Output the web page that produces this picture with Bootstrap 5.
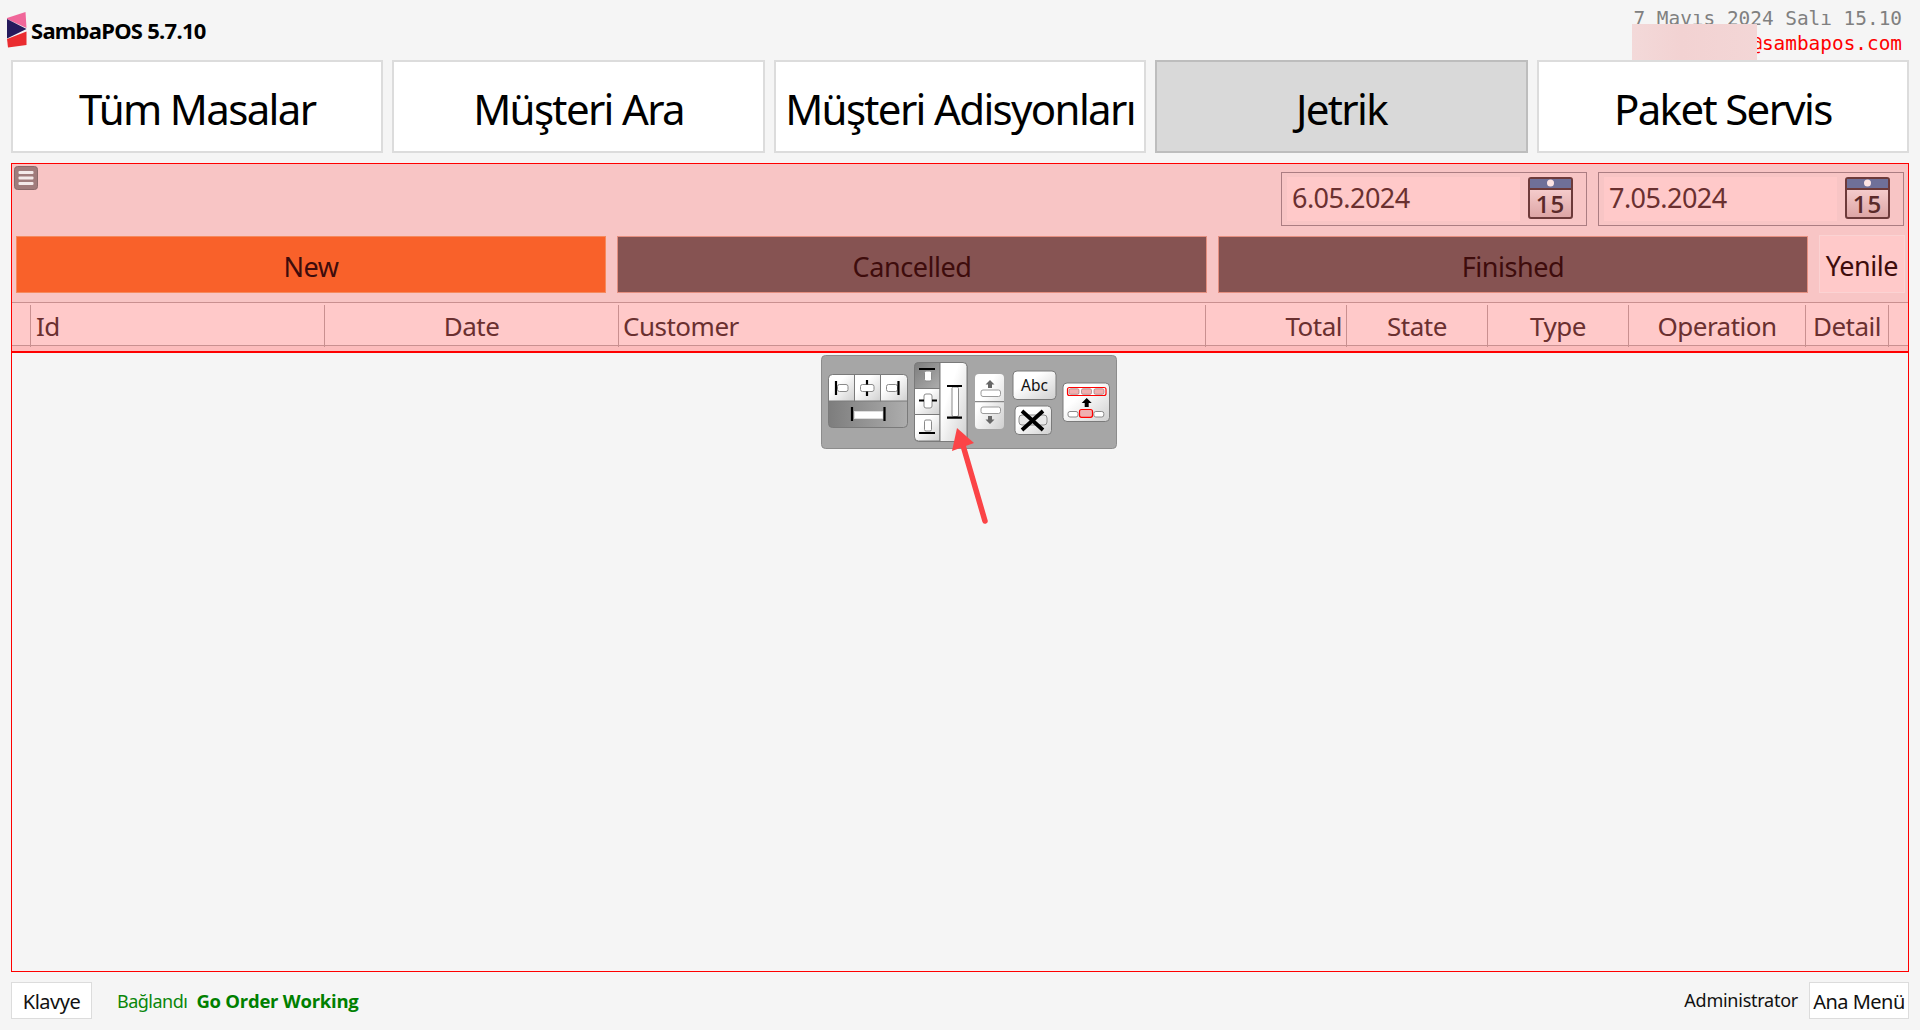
<!DOCTYPE html>
<html lang="tr">
<head>
<meta charset="utf-8">
<title>SambaPOS</title>
<link href="https://cdn.jsdelivr.net/npm/bootstrap@5.3.0/dist/css/bootstrap.min.css" rel="stylesheet">
<style>
html,body{height:100%;}
body{background:#f5f5f5;font-family:"Noto Sans","Open Sans",sans-serif;color:#000;overflow:hidden;}
.app-shell{height:1030px;padding:0 11px 11px 11px;}
.top-bar{height:60px;position:relative;}
.brand-logo{margin:12px 0 0 -5px;}
.brand-name{font-size:22px;font-weight:700;letter-spacing:-.72px;margin-left:4px;margin-top:14px;line-height:32px;}
.clock{font-family:"DejaVu Sans Mono","Liberation Mono",monospace;font-size:19.4px;line-height:25px;text-align:right;margin:6px 7px 0 0;}
.clock-date{color:#808080;}
.clock-mail{color:#f00;}
.mail-blur{position:absolute;left:1621px;top:24px;width:125px;height:36px;background:linear-gradient(90deg,#f3d9d9,#f2d2d2 40%,#f3d6d6);}
.tab-row{gap:9px;height:93px;}
.tab-btn{flex:1 1 0;background:#fff;border:2px solid #dcdcdc;border-radius:0;font-size:42px;letter-spacing:-1.65px;color:#000;padding:5px 0 0;line-height:1;}
.tab-btn.tab-on{background:#d9d9d9;border-color:#bdbdbd;}
.ticket-panel{margin-top:10px;border:1px solid #f00;min-height:0;}
.panel-head{background:#f8c5c5;}
.filter-row{height:62px;padding-right:4px;}
.menu-icon{margin:2px 0 0 2px;display:block;}
.date-box{width:306px;height:54px;margin-top:8px;border:1px solid #ab7d82;padding:4px 13px 4px 5px;gap:8px;}
.date-box + .date-box{margin-left:11px;}
.date-field{flex:1;background:#ffc9c9;color:#6a3030;font-size:27px;letter-spacing:-.55px;line-height:42px;padding-left:5px;}
.state-row{gap:11px;padding:10px 3px 0 4px;height:67px;}
.state-btn{flex:1 1 0;height:57px;border:1px solid #e58f80;border-radius:0;background:#865352;color:#3e0c0c;font-size:27px;letter-spacing:-.45px;padding:3px 0 0;line-height:1;}
.state-btn.state-on{background:#f9612a;color:#3e0c0c;border-color:#f58a5e;}
.state-refresh{width:86px;height:58px;margin-top:-1px;border:1px solid #fbd3d3;border-radius:0;background:#ffc9c9;color:#3e0c0c;font-size:27px;letter-spacing:-.45px;padding:3px 0 0;line-height:1;}
.grid-head{margin-top:9px;background:#ffc9c9;border-top:1px solid #c99090;border-bottom:1px solid #c99090;display:grid;grid-template-columns:19px 294px 294px 587px 141px 141px 141px 177px 83px 1fr;height:44px;}
.grid-col{border-right:1px solid #c99090;color:#6a3030;font-size:26px;letter-spacing:-.5px;line-height:42px;padding:0 4px;white-space:nowrap;margin-top:2px;}
.grid-col-id{padding-left:5px;}
.grid-col:last-child{border-right:0;}
.grid-strip{height:5px;background:#fcbcbc;}
.panel-rule{height:2px;background:#f00;}
.panel-body-area{position:relative;}
.tool-strip{position:absolute;left:809px;top:2px;display:block;}
.tool-arrow{position:absolute;left:938px;top:72px;display:block;}
.foot-row{margin-top:10px;height:37px;}
.foot-btn{background:#fff;border:1px solid #dcdcdc;border-radius:0;font-size:20px;letter-spacing:-.5px;color:#111;padding:2px 0 0;height:37px;line-height:1;}
.foot-klavye{width:81px;}
.foot-menu{width:100px;margin-left:11px;}
.foot-status{color:#0a860a;font-size:18px;letter-spacing:-.5px;margin-left:25px;padding-top:1px;}
.foot-work{color:#008000;font-family:"Open Sans",sans-serif;font-weight:700;font-size:18.5px;letter-spacing:-.25px;margin-left:9px;padding-top:1px;}
.foot-user{font-size:18px;letter-spacing:-.25px;color:#111;margin-top:-1px;}
</style>
</head>
<body>
<div class="app-shell d-flex flex-column">
  <header class="top-bar d-flex justify-content-between align-items-start flex-shrink-0">
    <div class="d-flex align-items-start">
      <svg class="brand-logo" width="21" height="36" viewBox="5 12 21 36" aria-hidden="true">
        <polygon points="6,18 24.5,12 25.5,28 6,19" fill="#f0679a"/>
        <polygon points="6,19 25.5,29 6,38.5" fill="#241a5c"/>
        <polygon points="25.5,31.5 25.5,45 7,47.5 6,39" fill="#ea2c30"/>
      </svg>
      <div class="brand-name">SambaPOS 5.7.10</div>
    </div>
    <div class="clock">
      <div class="clock-date">7 Mavıs 2024 Salı 15.10</div>
      <div class="clock-mail">@sambapos.com</div>
    </div>
    <div class="mail-blur"></div>
  </header>

  <nav class="tab-row d-flex flex-shrink-0">
    <button type="button" class="btn tab-btn">Tüm Masalar</button>
    <button type="button" class="btn tab-btn">Müşteri Ara</button>
    <button type="button" class="btn tab-btn">Müşteri Adisyonları</button>
    <button type="button" class="btn tab-btn tab-on">Jetrik</button>
    <button type="button" class="btn tab-btn">Paket Servis</button>
  </nav>

  <main class="ticket-panel d-flex flex-column flex-grow-1">
    <div class="panel-head">
      <div class="filter-row d-flex align-items-start">
        <svg class="menu-icon" width="24" height="24" viewBox="0 0 24 24" aria-hidden="true">
          <rect x=".5" y=".5" width="23" height="23" rx="3" fill="#a07c7c" stroke="#8a6a6a"/>
          <rect x="4.5" y="5" width="15" height="3" rx="1" fill="#f3eaea"/>
          <rect x="4.5" y="10.500" width="15" height="3" rx="1" fill="#f3eaea"/>
          <rect x="4.500" y="16" width="15" height="3" rx="1" fill="#f3eaea"/>
        </svg>
        <div class="ms-auto d-flex">
          <div class="date-box d-flex">
            <div class="date-field">6.05.2024</div>
            <svg width="45" height="42" viewBox="0 0 45 42" aria-hidden="true">
              <defs><linearGradient id="calA" x1="0" y1="0" x2="0" y2="1"><stop offset="0" stop-color="#ffdcdc"/><stop offset="1" stop-color="#dca4a4"/></linearGradient></defs>
              <rect x="1" y="1" width="43" height="40" rx="2" fill="url(#calA)" stroke="#6d3a3a" stroke-width="2"/>
              <rect x="2" y="2" width="41" height="9" fill="#6f7099"/>
              <rect x="2" y="11" width="41" height="2" fill="#6d3a3a"/>
              <circle cx="22.500" cy="6" r="3.500" fill="#fde4e4"/>
              <text x="22.500" y="36" text-anchor="middle" font-family="Open Sans, sans-serif" font-size="24" font-weight="600" letter-spacing="1" fill="#5a2a2a">15</text>
            </svg>
          </div>
          <div class="date-box d-flex">
            <div class="date-field">7.05.2024</div>
            <svg width="45" height="42" viewBox="0 0 45 42" aria-hidden="true">
              <rect x="1" y="1" width="43" height="40" rx="2" fill="url(#calA)" stroke="#6d3a3a" stroke-width="2"/>
              <rect x="2" y="2" width="41" height="9" fill="#6f7099"/>
              <rect x="2" y="11" width="41" height="2" fill="#6d3a3a"/>
              <circle cx="22.500" cy="6" r="3.500" fill="#fde4e4"/>
              <text x="22.500" y="36" text-anchor="middle" font-family="Open Sans, sans-serif" font-size="24" font-weight="600" letter-spacing="1" fill="#5a2a2a">15</text>
            </svg>
          </div>
        </div>
      </div>
      <div class="state-row d-flex">
        <button type="button" class="btn state-btn state-on">New</button>
        <button type="button" class="btn state-btn">Cancelled</button>
        <button type="button" class="btn state-btn">Finished</button>
        <button type="button" class="btn state-refresh">Yenile</button>
      </div>
      <div class="grid-head">
        <div class="grid-col"></div>
        <div class="grid-col grid-col-id">Id</div>
        <div class="grid-col text-center">Date</div>
        <div class="grid-col">Customer</div>
        <div class="grid-col text-end">Total</div>
        <div class="grid-col text-center">State</div>
        <div class="grid-col text-center">Type</div>
        <div class="grid-col text-center">Operation</div>
        <div class="grid-col text-center">Detail</div>
        <div class="grid-col"></div>
      </div>
      <div class="grid-strip"></div>
    </div>
    <div class="panel-rule"></div>
    <div class="panel-body-area flex-grow-1">
      <svg class="tool-strip" width="296" height="94" viewBox="0 0 296 94" aria-label="Düzen araç çubuğu">
        <defs>
          <linearGradient id="tw" x1="0" y1="0" x2="1" y2="1"><stop offset=".35" stop-color="#fff"/><stop offset="1" stop-color="#cfcfcf"/></linearGradient>
          <linearGradient id="td" x1="0" y1="0" x2="1" y2="0"><stop offset="0" stop-color="#7d7d7d"/><stop offset="1" stop-color="#adadad"/></linearGradient>
          <linearGradient id="tv" x1="0" y1="0" x2="1" y2="1"><stop offset="0" stop-color="#7d7d7d"/><stop offset="1" stop-color="#adadad"/></linearGradient>
        </defs>
        <rect x=".5" y=".5" width="295" height="93" rx="4" fill="#a6a6a6" stroke="#8c8c8c"/>
        <g stroke="#7a7a7a">
          <rect x="7.500" y="19.500" width="79" height="53" rx="4" fill="url(#td)"/>
          <path d="M11.500 19.500H33.500V46H7.500V23.500a4 4 0 0 1 4-4Z" fill="url(#tw)"/>
          <rect x="33.500" y="19.500" width="26" height="26.500" fill="url(#tw)"/>
          <path d="M59.500 19.500H82.500a4 4 0 0 1 4 4V46H59.500Z" fill="url(#tw)"/>
        </g>
        <g fill="#fff" stroke="#8a8a8a">
          <rect x="16.500" y="29.500" width="10.500" height="7" rx="2"/>
          <rect x="39.500" y="29.500" width="13.500" height="7" rx="2"/>
          <rect x="65.500" y="29.500" width="11" height="7" rx="2"/>
          <rect x="33.500" y="56.500" width="28.500" height="7" fill="#fff" stroke="#ddd"/>
        </g>
        <g stroke="#000" stroke-width="2.200">
          <path d="M15 26v14M46 25v4.500M46 36.500v4.500M77.500 26v14M31 52v14M63.500 52v14"/>
        </g>
        <g stroke="#7a7a7a">
          <rect x="93.500" y="7.500" width="52.500" height="79" rx="4" fill="url(#tw)"/>
          <path d="M119 7.500H97.500a4 4 0 0 0-4 4V33.500H119Z" fill="url(#tv)"/>
          <rect x="93.500" y="33.500" width="25.500" height="26" fill="url(#tw)"/>
          <path d="M93.500 59.500H119V86H97.500a4 4 0 0 1-4-4Z" fill="url(#tw)"/>
          <path d="M119 7.500H142a4 4 0 0 1 4 4V82.500a4 4 0 0 1-4 4H119Z" fill="url(#tw)"/>
        </g>
        <g fill="#fff" stroke="#8a8a8a">
          <rect x="103.500" y="16" width="7" height="10" rx="1.500"/>
          <rect x="103" y="39" width="8" height="14" rx="2"/>
          <rect x="103.500" y="65" width="7" height="11" rx="1.500"/>
          <rect x="131" y="32" width="6.500" height="29.500" rx="1.500"/>
        </g>
        <g stroke="#000" stroke-width="2.200">
          <path d="M98 14H114M98 45.500H103M111 45.500H116M98 78H114M126 31H141M126 62.700H141"/>
        </g>
        <path d="M158 19H179a4 4 0 0 1 4 4V70a4 4 0 0 1-4 4H158a4 4 0 0 1-4-4V23a4 4 0 0 1 4-4Z" fill="url(#tw)"/>
        <path d="M154 46.700H183" stroke="#6f6f6f"/>
        <rect x="160" y="35" width="19.500" height="6.500" rx="2" fill="#fff" stroke="#9a9a9a"/>
        <rect x="160" y="52" width="19.500" height="6.500" rx="2" fill="#fff" stroke="#9a9a9a"/>
        <path d="M169 25l4.500 4.500H171V33h-4v-3.500h-2.500ZM169 69l4.500-4.500H171V61h-4v3.500h-2.500Z" fill="#666"/>
        <rect x="192" y="16" width="43" height="28.500" rx="4" fill="url(#tw)" stroke="#7a7a7a"/>
        <text x="213.500" y="36" text-anchor="middle" font-family="Noto Sans, sans-serif" font-size="15.500" fill="#111">Abc</text>
        <rect x="194" y="51" width="36.500" height="28.500" rx="4" fill="url(#tw)" stroke="#7a7a7a"/>
        <rect x="198" y="60" width="28" height="10" rx="3" fill="#e8e8e8" stroke="#8a8a8a"/>
        <path d="M201 56L222 75M222 56L201 75" stroke="#000" stroke-width="3.800"/>
        <rect x="242" y="28" width="46.500" height="38.500" rx="4" fill="url(#tw)" stroke="#7a7a7a"/>
        <rect x="246.500" y="32.500" width="38.500" height="8" rx="2" fill="#fff" stroke="#f00" stroke-width="1.200"/>
        <g fill="#f0b0b0" stroke="#9a7a7a" stroke-width=".7">
          <rect x="248" y="33.800" width="10" height="5.500" rx="1.500"/>
          <rect x="260.500" y="33.800" width="10" height="5.500" rx="1.500"/>
          <rect x="273" y="33.800" width="10" height="5.500" rx="1.500"/>
        </g>
        <path d="M265.700 43l5 5h-3v4h-4v-4h-3Z" fill="#000"/>
        <rect x="247" y="56.500" width="10" height="5.500" rx="2" fill="#fff" stroke="#8a8a8a"/>
        <rect x="272.800" y="56.500" width="10" height="5.500" rx="2" fill="#fff" stroke="#8a8a8a"/>
        <rect x="258.500" y="54.500" width="13" height="7.800" rx="2" fill="#f0b0b0" stroke="#f00" stroke-width="1.200"/>
      </svg>
      <svg class="tool-arrow" width="45" height="100" viewBox="950 425 45 100" aria-hidden="true">
        <path d="M962 442L985 521" stroke="#fb4447" stroke-width="5.500" stroke-linecap="round"/>
        <polygon points="957,428 952,451 974,443" fill="#fb4447"/>
      </svg>
    </div>
  </main>

  <footer class="foot-row d-flex align-items-center flex-shrink-0">
    <button type="button" class="btn foot-btn foot-klavye">Klavye</button>
    <span class="foot-status">Bağlandı</span>
    <span class="foot-work">Go Order Working</span>
    <span class="foot-user ms-auto">Administrator</span>
    <button type="button" class="btn foot-btn foot-menu">Ana Menü</button>
  </footer>
</div>
<script src="https://cdn.jsdelivr.net/npm/bootstrap@5.3.0/dist/js/bootstrap.bundle.min.js"></script>
</body>
</html>
